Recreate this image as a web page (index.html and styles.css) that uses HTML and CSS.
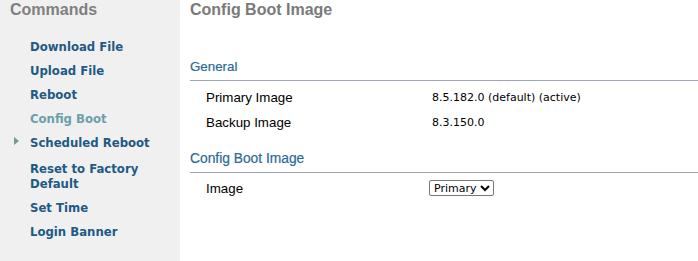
FILE: index.html
```html
<!DOCTYPE html>
<html>
<head>
<meta charset="utf-8">
<link rel="stylesheet" href="styles.css">
</head>
<body>
<div class="page">
  <aside class="sidebar">
    <div class="side-title">Commands</div>
    <ul class="nav">
      <li><a>Download File</a></li>
      <li><a>Upload File</a></li>
      <li><a>Reboot</a></li>
      <li class="current"><a>Config Boot</a></li>
      <li class="has-sub"><span class="arrow"></span><a>Scheduled Reboot</a></li>
      <li class="wrap"><a>Reset to Factory<br>Default</a></li>
      <li><a>Set Time</a></li>
      <li><a>Login Banner</a></li>
    </ul>
  </aside>
  <main class="content">
    <h1 class="page-title">Config Boot Image</h1>
    <h2 class="section first">General</h2>
    <div class="row"><span class="label">Primary Image</span><span class="value">8.5.182.0 (default) (active)</span></div>
    <div class="row"><span class="label">Backup Image</span><span class="value">8.3.150.0</span></div>
    <h2 class="section second">Config Boot Image</h2>
    <div class="row"><span class="label">Image</span><span class="value"><select class="sel"><option>Primary</option><option>Backup</option></select></span></div>
  </main>
</div>
</body>
</html>
```
FILE: styles.css
```css
html, body { margin: 0; padding: 0; background: #fff; }
.page { display: flex; height: 261px; }
.sidebar { width: 180px; flex: none; background: #f0f0f0; }
.side-title { font: bold 16px/20px "Liberation Sans", Arial, sans-serif; color: #808080; padding-left: 10px; }
.nav { list-style: none; margin: 0; padding: 19px 0 0 30px; }
.nav li { position: relative; font-family: "DejaVu Sans Condensed", "DejaVu Sans", Verdana, sans-serif; font-stretch: semi-condensed; font-weight: bold; font-size: 13px; line-height: 15px; color: #1e5a85; margin-bottom: 9px; }
.nav li.wrap { margin-top: 11px; }
.nav li.current { color: #6ba0a9; }
.nav a { color: inherit; text-decoration: none; }
.arrow { position: absolute; left: -16px; top: 2px; width: 0; height: 0; border-top: 4.5px solid transparent; border-bottom: 4.5px solid transparent; border-left: 5px solid #6f9a9a; }
.content { flex: 1; padding-left: 10px; }
.page-title { margin: 0; font: bold 16px/20px "Liberation Sans", Arial, sans-serif; color: #7a7a7a; }
.section { margin: 0; font: normal 13.33px/16px "Liberation Sans", Arial, sans-serif; color: #2b6a97; padding-bottom: 5px; border-bottom: 1px solid #9ea3bd; -webkit-text-stroke: 0.2px #2b6a97; }
.section.second { font-size: 13.8px; }
.section.first { margin-top: 39px; margin-bottom: 4px; }
.section.second { margin-top: 16px; margin-bottom: 3px; }
.row { display: flex; align-items: center; height: 25px; }
.row .label { width: 226px; padding-left: 16px; font: 13.33px/16px "Liberation Sans", Arial, sans-serif; color: #000; }
.row .value { font: 11px/16px "DejaVu Sans", Verdana, sans-serif; color: #000; }
.sel { margin-left: -3px; font: 11px "DejaVu Sans", Verdana, sans-serif; height: 16px; padding: 0; border: 1px solid #767676; border-radius: 2px; background: #fff; color: #000; }
```
